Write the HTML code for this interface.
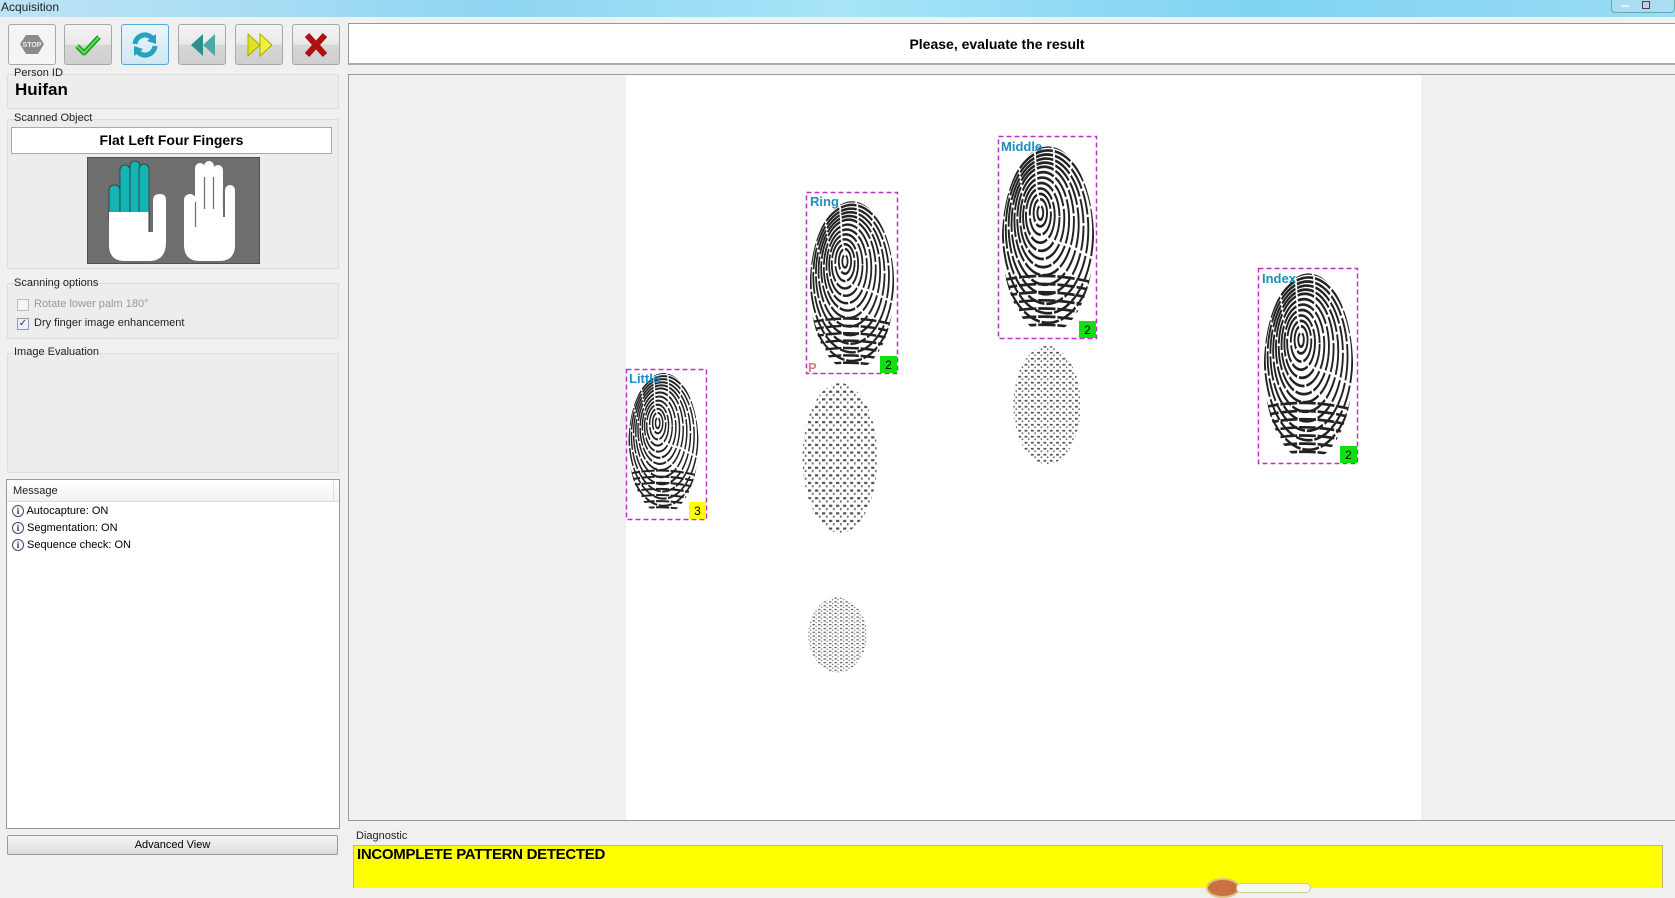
<!DOCTYPE html>
<html><head><meta charset="utf-8">
<style>
*{box-sizing:border-box;margin:0;padding:0}
body{width:1675px;height:888px;overflow:hidden;background:#f0f0f0;font-family:"Liberation Sans",Arial,sans-serif;position:relative;color:#000}
.abs{position:absolute}
.title{left:0;top:0;width:1675px;height:17px;background:linear-gradient(90deg,#bfe3f5 0%,#8fd6f2 30%,#a7e4f7 50%,#7fd3f3 75%,#9adcf5 100%);font-size:12px;line-height:15px;padding-left:1px;color:#222}
.btn{top:24px;width:48px;height:41px;border:1px solid #a8a8a8;border-radius:3px;background:linear-gradient(#f4f4f4 0%,#e8e8e8 50%,#d6d6d6 51%,#cfcfcf 100%)}
.grp{border:1px solid #dcdcdc;border-radius:2px;background:#ededed}
.lbl{font-size:11px;color:#222}
</style></head><body>
<div class="abs title">Acquisition</div>
<div class="abs" style="left:1611px;top:0;width:64px;height:13px;border:1px solid #6aa;border-top:none;border-radius:0 0 4px 4px;background:#a9def2"></div>
<div class="abs" style="left:1621px;top:5px;width:8px;height:2px;background:#eef"></div>
<div class="abs" style="left:1642px;top:1px;width:8px;height:8px;border:1px solid #445;background:#ccd"></div>

<div class="abs btn" style="left:8px;background:#f5f5f5"><svg width="46" height="39"><polygon points="17,10 29,10 35,19 29,29 17,29 11,19" fill="#8a8a8a"/><text x="23" y="22" font-size="7" font-weight="bold" fill="#eee" text-anchor="middle" font-family="Liberation Sans">STOP</text></svg></div>
<div class="abs btn" style="left:64px"><svg width="46" height="39"><path d="M12 21 L19 28 L34 12" stroke="#18a018" stroke-width="5" fill="none" stroke-linejoin="round"/><path d="M12 21 L19 28 L34 12" stroke="#5de05d" stroke-width="2" fill="none"/></svg></div>
<div class="abs btn" style="left:121px;border-color:#5aa8d0;background:linear-gradient(#eaf5fb,#cfe7f3)"><svg width="46" height="39"><path d="M13 19 A10 10 0 0 1 31 14" stroke="#2aa0c0" stroke-width="5" fill="none"/><polygon points="34,9 34,19 25,16" fill="#2aa0c0"/><path d="M33 21 A10 10 0 0 1 15 26" stroke="#2aa0c0" stroke-width="5" fill="none"/><polygon points="12,31 12,21 21,24" fill="#2aa0c0"/></svg></div>
<div class="abs btn" style="left:178px"><svg width="46" height="39"><polygon points="24,9 24,31 12,20" fill="#2f8f8f"/><polygon points="36,9 36,31 24,20" fill="#4aa8a8"/></svg></div>
<div class="abs btn" style="left:235px"><svg width="46" height="39"><polygon points="12,9 12,31 24,20" fill="#e0e020" stroke="#aa0" stroke-width="1"/><polygon points="24,9 24,31 36,20" fill="#f0f040" stroke="#aa0" stroke-width="1"/></svg></div>
<div class="abs btn" style="left:292px"><svg width="46" height="39"><path d="M14 10 L32 30 M32 10 L14 30" stroke="#b01010" stroke-width="6"/></svg></div>

<div class="abs" style="left:348px;top:23px;width:1327px;height:42px;background:#fff;border-top:1px solid #999;border-bottom:2px solid #aaa;border-left:1px solid #999;font-weight:bold;font-size:14px;line-height:40px;text-align:center"><span style="position:relative;left:-15px">Please, evaluate the result</span></div>

<div class="abs grp" style="left:7px;top:74px;width:332px;height:35px"></div>
<div class="abs lbl" style="left:14px;top:67px">Person ID</div>
<div class="abs" style="left:15px;top:80px;font-size:17px;font-weight:bold">Huifan</div>

<div class="abs grp" style="left:7px;top:119px;width:332px;height:150px"></div>
<div class="abs lbl" style="left:14px;top:112px">Scanned Object</div>
<div class="abs" style="left:11px;top:127px;width:321px;height:27px;background:#fff;border:1px solid #aaa;font-weight:bold;font-size:14px;text-align:center;line-height:25px">Flat Left Four Fingers</div>
<svg class="abs" style="left:87px;top:157px" width="173" height="107">
<rect width="173" height="107" fill="#6e6e6e" stroke="#333"/>
<g fill="#12b4b4" stroke="#333" stroke-width="0.8">
<rect x="22" y="28" width="11" height="40" rx="5"/>
<rect x="33" y="8" width="10" height="60" rx="5"/>
<rect x="43" y="4" width="10" height="64" rx="5"/>
<rect x="52" y="7" width="10" height="61" rx="5"/>
</g>
<path d="M22 55 H62 V75 H66 V43 Q66 37 73 37 Q79 37 79 43 V85 Q79 104 62 104 H38 Q22 104 22 88 Z" fill="#fff"/>
<line x1="62" y1="55" x2="62" y2="75" stroke="#333"/>
<g fill="#fff">
<rect x="97" y="37" width="12" height="55" rx="6"/>
<rect x="108" y="6" width="10" height="80" rx="5"/>
<rect x="117" y="4" width="10" height="80" rx="5"/>
<rect x="126" y="8" width="10" height="80" rx="5"/>
<rect x="138" y="28" width="10" height="60" rx="5"/>
<path d="M97 60 H148 V88 Q148 104 132 104 H113 Q97 104 97 88 Z"/>
</g>
<g stroke="#6e6e6e" stroke-width="1.2"><line x1="117.5" y1="20" x2="117.5" y2="52"/><line x1="126.5" y1="20" x2="126.5" y2="52"/><line x1="136.5" y1="32" x2="136.5" y2="52"/><line x1="108.5" y1="45" x2="108.5" y2="70"/></g>
</svg>

<div class="abs grp" style="left:7px;top:283px;width:332px;height:56px"></div>
<div class="abs lbl" style="left:14px;top:277px">Scanning options</div>
<div class="abs" style="left:17px;top:299px;width:12px;height:12px;border:1px solid #bbb;background:#f6f6f6"></div>
<div class="abs lbl" style="left:34px;top:298px;color:#999">Rotate lower palm 180°</div>
<div class="abs" style="left:17px;top:318px;width:12px;height:12px;border:1px solid #8a9bb0;background:#eef;font-size:10px;line-height:10px;text-align:center;color:#335">✓</div>
<div class="abs lbl" style="left:34px;top:317px">Dry finger image enhancement</div>

<div class="abs grp" style="left:7px;top:353px;width:332px;height:120px"></div>
<div class="abs lbl" style="left:14px;top:346px">Image Evaluation</div>

<div class="abs" style="left:6px;top:479px;width:334px;height:350px;background:#fff;border:1px solid #999"></div>
<div class="abs" style="left:7px;top:480px;width:332px;height:22px;background:linear-gradient(#fff,#f2f2f2);border-bottom:1px solid #ddd"></div>
<div class="abs lbl" style="left:13px;top:485px">Message</div>
<div class="abs" style="left:333px;top:480px;width:1px;height:22px;background:#ddd"></div>
<div class="abs" style="left:12px;top:503px;font-size:11px;line-height:17px">
<div><span style="display:inline-block;width:12px;height:12px;border:1px solid #446;border-radius:50%;font-size:9px;line-height:10px;text-align:center;color:#226;font-weight:bold;font-family:'Liberation Serif'">i</span> Autocapture: ON</div>
<div><span style="display:inline-block;width:12px;height:12px;border:1px solid #446;border-radius:50%;font-size:9px;line-height:10px;text-align:center;color:#226;font-weight:bold;font-family:'Liberation Serif'">i</span> Segmentation: ON</div>
<div><span style="display:inline-block;width:12px;height:12px;border:1px solid #446;border-radius:50%;font-size:9px;line-height:10px;text-align:center;color:#226;font-weight:bold;font-family:'Liberation Serif'">i</span> Sequence check: ON</div>
</div>

<div class="abs" style="left:7px;top:835px;width:331px;height:20px;border:1px solid #999;border-radius:2px;background:linear-gradient(#f6f6f6,#dcdcdc);font-size:11px;text-align:center;line-height:18px">Advanced View</div>

<div class="abs" style="left:348px;top:74px;width:1327px;height:747px;border:1px solid #999;border-right:none;background:#f0f0f0"></div>
<div class="abs" style="left:626px;top:75px;width:795px;height:745px;background:#fff"></div>

<svg class="abs" style="left:0;top:0" width="1675" height="888">
<defs>
<symbol id="fp" viewBox="0 0 100 140" preserveAspectRatio="none">
<clipPath id="cf"><ellipse cx="50" cy="70" rx="48" ry="69"/></clipPath>
<g clip-path="url(#cf)" fill="none" stroke="#222" stroke-width="2" stroke-dasharray="18 2">
<ellipse cx="42" cy="50" rx="3" ry="5"/><ellipse cx="42" cy="50" rx="7" ry="10"/><ellipse cx="42" cy="51" rx="11" ry="15"/><ellipse cx="42" cy="52" rx="15" ry="20"/><ellipse cx="43" cy="53" rx="19" ry="25"/><ellipse cx="44" cy="54" rx="23" ry="30"/><ellipse cx="45" cy="55" rx="27" ry="35"/><ellipse cx="46" cy="56" rx="31" ry="40"/><ellipse cx="47" cy="58" rx="35" ry="45"/><ellipse cx="48" cy="60" rx="39" ry="50"/><ellipse cx="49" cy="62" rx="43" ry="55"/><ellipse cx="50" cy="64" rx="47" ry="60"/><ellipse cx="50" cy="66" rx="51" ry="65"/>
<path d="M0 100 Q50 92 100 102 M0 106 Q50 98 100 108 M0 112 Q50 104 100 114 M0 118 Q50 110 100 120 M0 124 Q50 116 100 126 M0 130 Q50 122 100 132 M0 136 Q50 128 100 138"/>
</g>
</symbol>
<pattern id="grain" width="9" height="7" patternUnits="userSpaceOnUse"><rect x="0" y="1" width="4" height="2" fill="#222"/><rect x="5" y="4" width="2" height="2" fill="#333"/></pattern>
<symbol id="gp" viewBox="0 0 100 140" preserveAspectRatio="none"><ellipse cx="50" cy="70" rx="48" ry="69" fill="url(#grain)" opacity="0.8"/></symbol>
</defs>
<use href="#fp" x="627" y="372" width="73" height="143"/>
<use href="#fp" x="808" y="200" width="88" height="172"/>
<use href="#gp" x="801" y="382" width="78" height="152"/>
<use href="#gp" x="807" y="597" width="61" height="76"/>
<use href="#fp" x="1000" y="145" width="96" height="190"/>
<use href="#gp" x="1012" y="345" width="70" height="120"/>
<use href="#fp" x="1262" y="272" width="93" height="190"/>
<g fill="none" stroke="#c030c8" stroke-width="1.5" stroke-dasharray="5 3">
<rect x="626.5" y="369.5" width="80" height="150"/>
<rect x="806.5" y="192.5" width="91" height="181"/>
<rect x="998.5" y="136.5" width="98" height="202"/>
<rect x="1258.5" y="268.5" width="99" height="195"/>
</g>
<g font-family="Liberation Sans" font-weight="bold" font-size="13" fill="#1a8fc0">
<text x="629" y="383">Little</text><text x="810" y="206">Ring</text><text x="1001" y="151">Middle</text><text x="1262" y="283">Index</text>
</g>
<text x="808" y="372" font-family="Liberation Sans" font-weight="bold" font-size="13" fill="#d08080">P</text>
<rect x="689" y="502" width="17" height="17" fill="#ffff00"/><text x="697.5" y="515" font-size="12" text-anchor="middle" font-family="Liberation Sans">3</text>
<rect x="880" y="356" width="17" height="17" fill="#10e010"/><text x="888.5" y="369" font-size="12" text-anchor="middle" font-family="Liberation Sans">2</text>
<rect x="1079" y="321" width="17" height="17" fill="#10e010"/><text x="1087.5" y="334" font-size="12" text-anchor="middle" font-family="Liberation Sans">2</text>
<rect x="1340" y="446" width="17" height="17" fill="#10e010"/><text x="1348.5" y="459" font-size="12" text-anchor="middle" font-family="Liberation Sans">2</text>
</svg>

<div class="abs lbl" style="left:356px;top:830px">Diagnostic</div>
<div class="abs" style="left:353px;top:845px;width:1310px;height:43px;background:#ffff00;border:1px solid #b8b890;border-bottom:none"></div>
<div class="abs" style="left:357px;top:846px;font-weight:bold;font-size:15px;letter-spacing:-0.3px">INCOMPLETE PATTERN DETECTED</div>
<div class="abs" style="left:1206px;top:878px;width:34px;height:20px;border-radius:50%;background:#c87040;border:2px solid #e0c080"></div>
<div class="abs" style="left:1236px;top:883px;width:75px;height:10px;border-radius:6px;background:#f8f8f0;border:1px solid #cc9"></div>
</body></html>
